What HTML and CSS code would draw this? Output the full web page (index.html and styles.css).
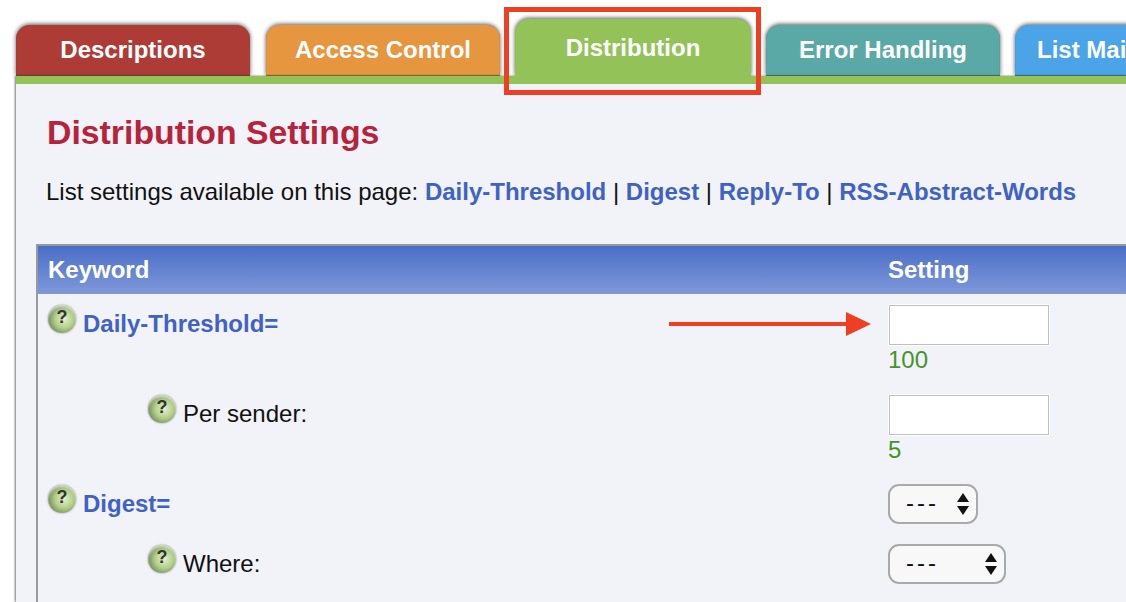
FILE: index.html
```html
<!DOCTYPE html>
<html lang="en">
<head>
  <meta charset="UTF-8">
  <title>Distribution Settings</title>
  <link rel="stylesheet" href="styles.css">
</head>
<body>
  <!-- Tabs -->
  <div class="tabs">
    <a class="tab tab-red" href="#">Descriptions</a>
    <a class="tab tab-orange" href="#">Access Control</a>
    <a class="tab tab-green active" href="#">Distribution</a>
    <a class="tab tab-teal" href="#">Error Handling</a>
    <a class="tab tab-blue" href="#">List Maintenance</a>
  </div>

  <!-- Panel -->
  <div class="panel">
    <h1>Distribution Settings</h1>
    <p class="intro">List settings available on this page:
      <a href="#">Daily-Threshold</a> | <a href="#">Digest</a> | <a href="#">Reply-To</a> | <a href="#">RSS-Abstract-Words</a>
    </p>

    <div class="settings">
      <div class="settings-head">
        <div class="col-keyword">Keyword</div>
        <div>Setting</div>
      </div>

      <div class="row row-tall">
        <div class="col-keyword"><span class="help">?</span><a class="keyword" href="#">Daily-Threshold=</a></div>
        <div>
          <input class="field" type="text">
          <div class="default">100</div>
        </div>
      </div>

      <div class="row row-tall">
        <div class="col-keyword sub"><span class="help">?</span><span class="label">Per sender:</span></div>
        <div>
          <input class="field" type="text">
          <div class="default">5</div>
        </div>
      </div>

      <div class="row">
        <div class="col-keyword"><span class="help">?</span><a class="keyword" href="#">Digest=</a></div>
        <div class="fake-select">---<svg class="updown" width="12" height="22" viewBox="0 0 12 22"><polygon points="6,0 12,9 0,9"/><polygon points="0,13 12,13 6,22"/></svg></div>
      </div>

      <div class="row">
        <div class="col-keyword sub"><span class="help">?</span><span class="label">Where:</span></div>
        <div class="fake-select wide">---<svg class="updown" width="12" height="22" viewBox="0 0 12 22"><polygon points="6,0 12,9 0,9"/><polygon points="0,13 12,13 6,22"/></svg></div>
      </div>
    </div>
  </div>

  <!-- Annotations on top of the screenshot -->
  <div class="callout"></div>
  <svg class="arrow" width="206" height="28" viewBox="0 0 206 28">
    <rect x="0" y="12" width="180" height="4" fill="#ee3e24"/>
    <polygon points="177,2 202,14 177,26" fill="#ee3e24"/>
  </svg>
</body>
</html>
```

FILE: styles.css
```css
* {
  margin: 0;
  padding: 0;
  box-sizing: border-box;
}

html, body {
  height: 100%;
  overflow: hidden;
  background: #fff;
  font-family: "Liberation Sans", Arial, sans-serif;
  color: #111;
}

/* Tabs */
.tabs {
  display: flex;
  align-items: flex-end;
  gap: 15px;
  height: 76px;
  padding-left: 16px;
  width: 1400px;
}

.tab {
  width: 234px;
  height: 51px;
  padding-top: 11px;
  border-radius: 14px 14px 0 0;
  box-shadow: 0 -1px 4px rgba(50, 50, 50, 0.8), inset 0 -1px 1px rgba(60, 60, 60, 0.5);
  color: #fff;
  font-size: 24px;
  font-weight: bold;
  line-height: 28px;
  text-align: center;
  text-decoration: none;
}

.tab-red { background: #ad3c37; }
.tab-orange { background: #e6963e; margin-left: 1px; }
.tab-green { background: #93c258; }
.tab-teal { background: #5ba9a6; }
.tab-blue { background: #4ba3e8; text-align: left; padding-left: 22px; }

.tab.active {
  width: 236px;
  height: 57px;
  padding-top: 15px;
  position: relative;
  z-index: 2;
  box-shadow: 0 -1px 4px rgba(50, 50, 50, 0.8);
  clip-path: inset(-8px -8px 0 -8px);
}

/* Panel */
.panel {
  position: relative;
  z-index: 1;
  margin-left: 16px;
  height: 526px;
  background: #f2f3f9;
  border-top: 8px solid #93c258;
  box-shadow: -1px 0 2px rgba(60, 60, 60, 0.7);
  padding: 29px 0 0 20px;
  overflow: hidden;
}

.panel h1 {
  margin-left: 11px;
  color: #b8233c;
  font-size: 33.8px;
  line-height: 38px;
}

.intro {
  margin: 27px 0 0 10px;
  font-size: 24px;
  line-height: 28px;
  white-space: nowrap;
}

.intro a {
  color: #3f62c4;
  font-weight: bold;
  text-decoration: none;
}

/* Settings table */
.settings {
  margin-top: 38px;
  width: 1200px;
  height: 500px;
  border-top: 2px solid #999;
  border-left: 2px solid #999;
}

.settings-head {
  display: flex;
  height: 48px;
  padding-top: 10px;
  background: linear-gradient(#4a6fc7, #7f98d9);
  color: #fff;
  font-size: 24px;
  font-weight: bold;
  line-height: 28px;
}

.col-keyword {
  flex: 0 0 850px;
  padding-left: 10px;
}

.row {
  display: flex;
  height: 60px;
  padding-top: 11px;
}

.row-tall {
  height: 90px;
}

.sub {
  padding-left: 110px;
}

.help {
  display: inline-block;
  width: 28px;
  height: 28px;
  margin-right: 7px;
  border-radius: 50%;
  background: radial-gradient(circle at 58% 50%, #e3efd0 0%, #b4d08a 42%, #7d9367 72%, #4f574a 100%);
  box-shadow: inset 0 2px 2px rgba(255, 255, 255, 0.6), 0 0 2px rgba(60, 60, 60, 0.6);
  color: #333;
  font-size: 18px;
  font-weight: bold;
  line-height: 25px;
  text-align: center;
  vertical-align: top;
}

.keyword {
  color: #3f62c4;
  font-size: 24px;
  font-weight: bold;
  line-height: 38px;
  text-decoration: none;
}

.label {
  font-size: 24px;
  line-height: 38px;
}

.field {
  display: block;
  width: 162px;
  height: 42px;
  margin-top: -1px;
  margin-bottom: -1px;
  background: #fff;
  border: 1px solid #fff;
  box-shadow: inset 0 0 0 1px #bfbfbf;
}

.default {
  color: #43952a;
  font-size: 24px;
  line-height: 30px;
}

.fake-select {
  position: relative;
  width: 90px;
  height: 40px;
  margin-top: -1px;
  padding-left: 16px;
  background: #f8f8f8;
  border: 2px solid #a9a9a9;
  border-radius: 11px;
  font-size: 24px;
  letter-spacing: 3px;
  line-height: 34px;
}

.fake-select.wide {
  width: 118px;
}

.updown {
  position: absolute;
  right: 7px;
  top: 7px;
  fill: #111;
}

/* Annotations */
.callout {
  position: absolute;
  left: 504px;
  top: 7px;
  width: 257px;
  height: 88px;
  border: 5px solid #ee3e24;
  z-index: 3;
}

.arrow {
  position: absolute;
  left: 669px;
  top: 310px;
  z-index: 3;
}
```
